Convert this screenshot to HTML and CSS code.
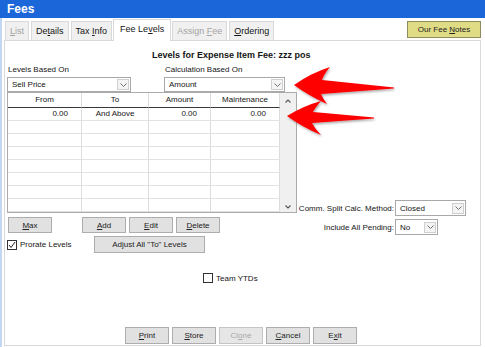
FILE: index.html
```html
<!DOCTYPE html>
<html lang="en">
<head>
  <meta charset="UTF-8" />
  <title>Fees</title>
  <link rel="stylesheet" href="styles.css">
</head>
<body>

  <!-- title bar -->
  <div class="titlebar">Fees</div>

  <div class="window">

    <!-- tabs -->
    <div class="tabs">
      <span class="tab off"><u>L</u>ist</span>
      <span class="tab">De<u>t</u>ails</span>
      <span class="tab">Tax <u>I</u>nfo</span>
      <span class="tab on">Fee Le<u>v</u>els</span>
      <span class="tab off">Assign <u>F</u>ee</span>
      <span class="tab"><u>O</u>rdering</span>
      <button class="notes-btn">Our Fee <u>N</u>otes</button>
    </div>

    <div class="panel">
      <div class="heading">Levels for Expense Item Fee: zzz pos</div>

      <!-- basis selects -->
      <div class="basis">
        <div class="field">
          <label>Levels Based On</label>
          <div class="select sel-levels"><span>Sell Price</span><i class="drop"><svg width="7" height="4" viewBox="0 0 7 4"><polyline points="0.5,0.5 3.5,3.5 6.5,0.5" fill="none" stroke="#707070" stroke-width="1"/></svg></i></div>
        </div>
        <div class="field">
          <label>Calculation Based On</label>
          <div class="select sel-calc"><span>Amount</span><i class="drop"><svg width="7" height="4" viewBox="0 0 7 4"><polyline points="0.5,0.5 3.5,3.5 6.5,0.5" fill="none" stroke="#707070" stroke-width="1"/></svg></i></div>
        </div>
      </div>

      <div class="middle">
        <div class="levels">
          <!-- levels grid -->
          <div class="grid">
            <div class="rows">
              <div class="row head"><span>From</span><span>To</span><span>Amount</span><span>Maintenance</span></div>
              <div class="row"><span class="num">0.00</span><span class="mid">And Above</span><span class="num">0.00</span><span class="num">0.00</span></div>
              <div class="row"><span></span><span></span><span></span><span></span></div>
              <div class="row"><span></span><span></span><span></span><span></span></div>
              <div class="row"><span></span><span></span><span></span><span></span></div>
              <div class="row"><span></span><span></span><span></span><span></span></div>
              <div class="row"><span></span><span></span><span></span><span></span></div>
              <div class="row"><span></span><span></span><span></span><span></span></div>
              <div class="row"><span></span><span></span><span></span><span></span></div>
            </div>
            <div class="scroll">
              <svg width="6" height="4" viewBox="0 0 6 4"><polyline points="0.5,3.5 3,1 5.5,3.5" fill="none" stroke="#555" stroke-width="1.1"/></svg>
              <svg width="6" height="4" viewBox="0 0 6 4"><polyline points="0.5,0.5 3,3 5.5,0.5" fill="none" stroke="#555" stroke-width="1.1"/></svg>
            </div>
          </div>

          <div class="btn-row">
            <button class="btn"><u>M</u>ax</button>
            <button class="btn push"><u>A</u>dd</button>
            <button class="btn"><u>E</u>dit</button>
            <button class="btn"><u>D</u>elete</button>
          </div>

          <div class="prorate-row">
            <div class="check">
              <span class="box"><svg width="8" height="8" viewBox="0 0 8 8"><polyline points="1,4 3,6.5 7,1" fill="none" stroke="#222" stroke-width="1"/></svg></span>
              <span>Prorate Levels</span>
            </div>
            <button class="btn wide">Adjust All "To" Levels</button>
          </div>
        </div>

        <!-- commission options -->
        <div class="comm">
          <label>Comm. Split Calc. Method:</label>
          <div class="select sel-closed"><span>Closed</span><i class="drop"><svg width="7" height="4" viewBox="0 0 7 4"><polyline points="0.5,0.5 3.5,3.5 6.5,0.5" fill="none" stroke="#707070" stroke-width="1"/></svg></i></div>
          <label>Include All Pending:</label>
          <div class="select sel-no"><span>No</span><i class="drop"><svg width="7" height="4" viewBox="0 0 7 4"><polyline points="0.5,0.5 3.5,3.5 6.5,0.5" fill="none" stroke="#707070" stroke-width="1"/></svg></i></div>
        </div>
      </div>

      <div class="team">
        <span class="box"></span>
        <span>Team YTDs</span>
      </div>

      <!-- bottom buttons -->
      <div class="actions">
        <button class="btn tall"><u>P</u>rint</button>
        <button class="btn tall"><u>S</u>tore</button>
        <button class="btn tall" disabled>Cl<u>o</u>ne</button>
        <button class="btn tall"><u>C</u>ancel</button>
        <button class="btn tall">E<u>x</u>it</button>
      </div>
    </div>
  </div>

  <!-- red callout arrows -->
  <svg class="arrows" width="485" height="347" viewBox="0 0 485 347">
    <defs>
      <filter id="shade" x="-10%" y="-30%" width="130%" height="170%">
        <feDropShadow dx="1" dy="1.5" stdDeviation="1.2" flood-color="#000" flood-opacity="0.35"/>
      </filter>
    </defs>
    <path filter="url(#shade)" fill="#ff0000" d="M294,85 Q311,73 330,67 Q324,74 322,80 L394,87.5 L394,88.5 L321,94 Q323,99 327,104 Q309,96 294,85 Z"/>
    <path filter="url(#shade)" fill="#ff0000" d="M287,116 Q303,106 321,101 Q315,108 313,112 L374,117.5 L374,118.5 L312,123 Q315,129 321,135 Q302,127 287,116 Z"/>
  </svg>

</body>
</html>
```

FILE: styles.css
```css
/* ===== base ===== */
*{box-sizing:border-box}
body{
  margin:0;
  width:485px;
  height:347px;
  overflow:hidden;
  position:relative;
  font-family:"Liberation Sans",Arial,sans-serif;
  font-size:8px;
  color:#151515;
  background:#fff;
}
u{text-decoration:underline}
button{font-family:inherit;cursor:default}

/* ===== title bar ===== */
.titlebar{
  height:18px;
  line-height:18px;
  padding-left:7px;
  background:#1b66d8;
  color:#fff;
  font-size:12px;
  font-weight:bold;
}

/* ===== window frame ===== */
.window{
  height:329px;
  display:flex;
  flex-direction:column;
  border-left:2px solid #c3d7f2;
  padding:0 4px 0 2px;
}

/* ===== tabs ===== */
.tabs{
  height:22px;
  display:flex;
  align-items:flex-end;
  padding-left:1px;
}
.tab{
  height:19px;
  line-height:18px;
  padding:0 4px;
  margin-right:2px;
  font-size:9px;
  background:#f0f0f0;
  border:1px solid #d9d9d9;
  border-bottom:none;
}
.tab.off{color:#a3a3a3}
.tab.on{
  height:22px;
  margin-bottom:-1px;
  margin-right:1px;
  margin-left:-1px;
  padding:0 6px;
  background:#fff;
  position:relative;
  z-index:1;
}
.notes-btn{
  margin-left:auto;
  align-self:flex-start;
  margin-top:3px;
  width:74px;
  height:17px;
  padding:0;
  font-size:8px;
  color:#222;
  background:#e0dc86;
  border:1px solid #8e8c5e;
}

/* ===== main panel ===== */
.panel{
  flex:1;
  margin-bottom:1px;
  display:flex;
  flex-direction:column;
  padding:9px 2px 1px 2px;
  border:1px solid #d9d9d9;
}
.heading{
  padding-left:145px;
  font-size:9px;
  font-weight:bold;
  line-height:11px;
}

/* ===== selects ===== */
.basis{display:flex;gap:33px;margin-top:4px}
.field label{display:block;line-height:10px;padding-left:1px;margin-bottom:2px}
.select{
  height:15px;
  display:flex;
  align-items:center;
  background:#fff;
  border:1px solid #a8a8a8;
}
.select span{flex:1;padding-left:4px;white-space:nowrap}
.drop{
  width:12px;
  height:11px;
  margin-right:1px;
  display:flex;
  align-items:center;
  justify-content:center;
  background:#f4f4f4;
  border:1px solid #cfcfcf;
}
.sel-levels{width:124px}
.sel-calc{width:121px}
.sel-closed{width:71px;height:16px}
.sel-no{width:43px;height:16px}

/* ===== levels grid ===== */
.middle{display:flex}
.levels{width:290px}
.grid{
  height:121px;
  display:flex;
  overflow:hidden;
  border:1px solid #ababab;
}
.rows{flex:1}
.row{
  display:grid;
  grid-template-columns:74px 67px 62px 69px;
}
.row span{
  height:13px;
  line-height:12px;
  white-space:nowrap;
  border-right:1px solid #dcdcdc;
  border-bottom:1px solid #e2e2e2;
}
.row.head span{
  height:15px;
  line-height:14px;
  text-align:center;
  border-bottom-color:#383838;
}
.row .num{text-align:right;padding-right:13px}
.row .mid{text-align:center}
.scroll{
  width:16px;
  display:flex;
  flex-direction:column;
  justify-content:space-between;
  align-items:center;
  padding:6px 0 3px;
  background:#f0f0f0;
}

/* ===== buttons ===== */
.btn{
  width:44px;
  height:16px;
  padding:0;
  font-size:8px;
  color:#222;
  background:#e1e1e1;
  border:1px solid #adadad;
}
.btn:disabled{color:#a8a8a8;border-color:#c4c4c4;background:#e6e6e6}
.btn.tall{height:17px}
.btn.wide{width:111px;height:17px}
.btn-row{display:flex;gap:3px;margin-top:4px;padding-left:1px}
.btn-row .push{margin-left:27px}

/* ===== checkboxes ===== */
.prorate-row{display:flex;align-items:center;margin-top:3px}
.check{width:87px;display:flex;align-items:center;gap:3px}
.box{
  width:10px;
  height:10px;
  display:flex;
  align-items:center;
  justify-content:center;
  background:#fff;
  border:1px solid #333;
}

/* ===== commission fields ===== */
.comm{
  display:grid;
  grid-template-columns:98px auto;
  row-gap:3px;
  align-items:center;
  align-content:start;
  margin-top:108px;
}
.comm label{justify-self:end;padding-right:1px;white-space:nowrap}

.team{display:flex;align-items:center;gap:3px;margin-top:20px;padding-left:196px}

/* ===== bottom bar ===== */
.actions{margin-top:auto;display:flex;justify-content:center;gap:3px;padding-right:3px}

/* ===== callout arrows ===== */
.arrows{position:absolute;left:0;top:0;pointer-events:none}
```
